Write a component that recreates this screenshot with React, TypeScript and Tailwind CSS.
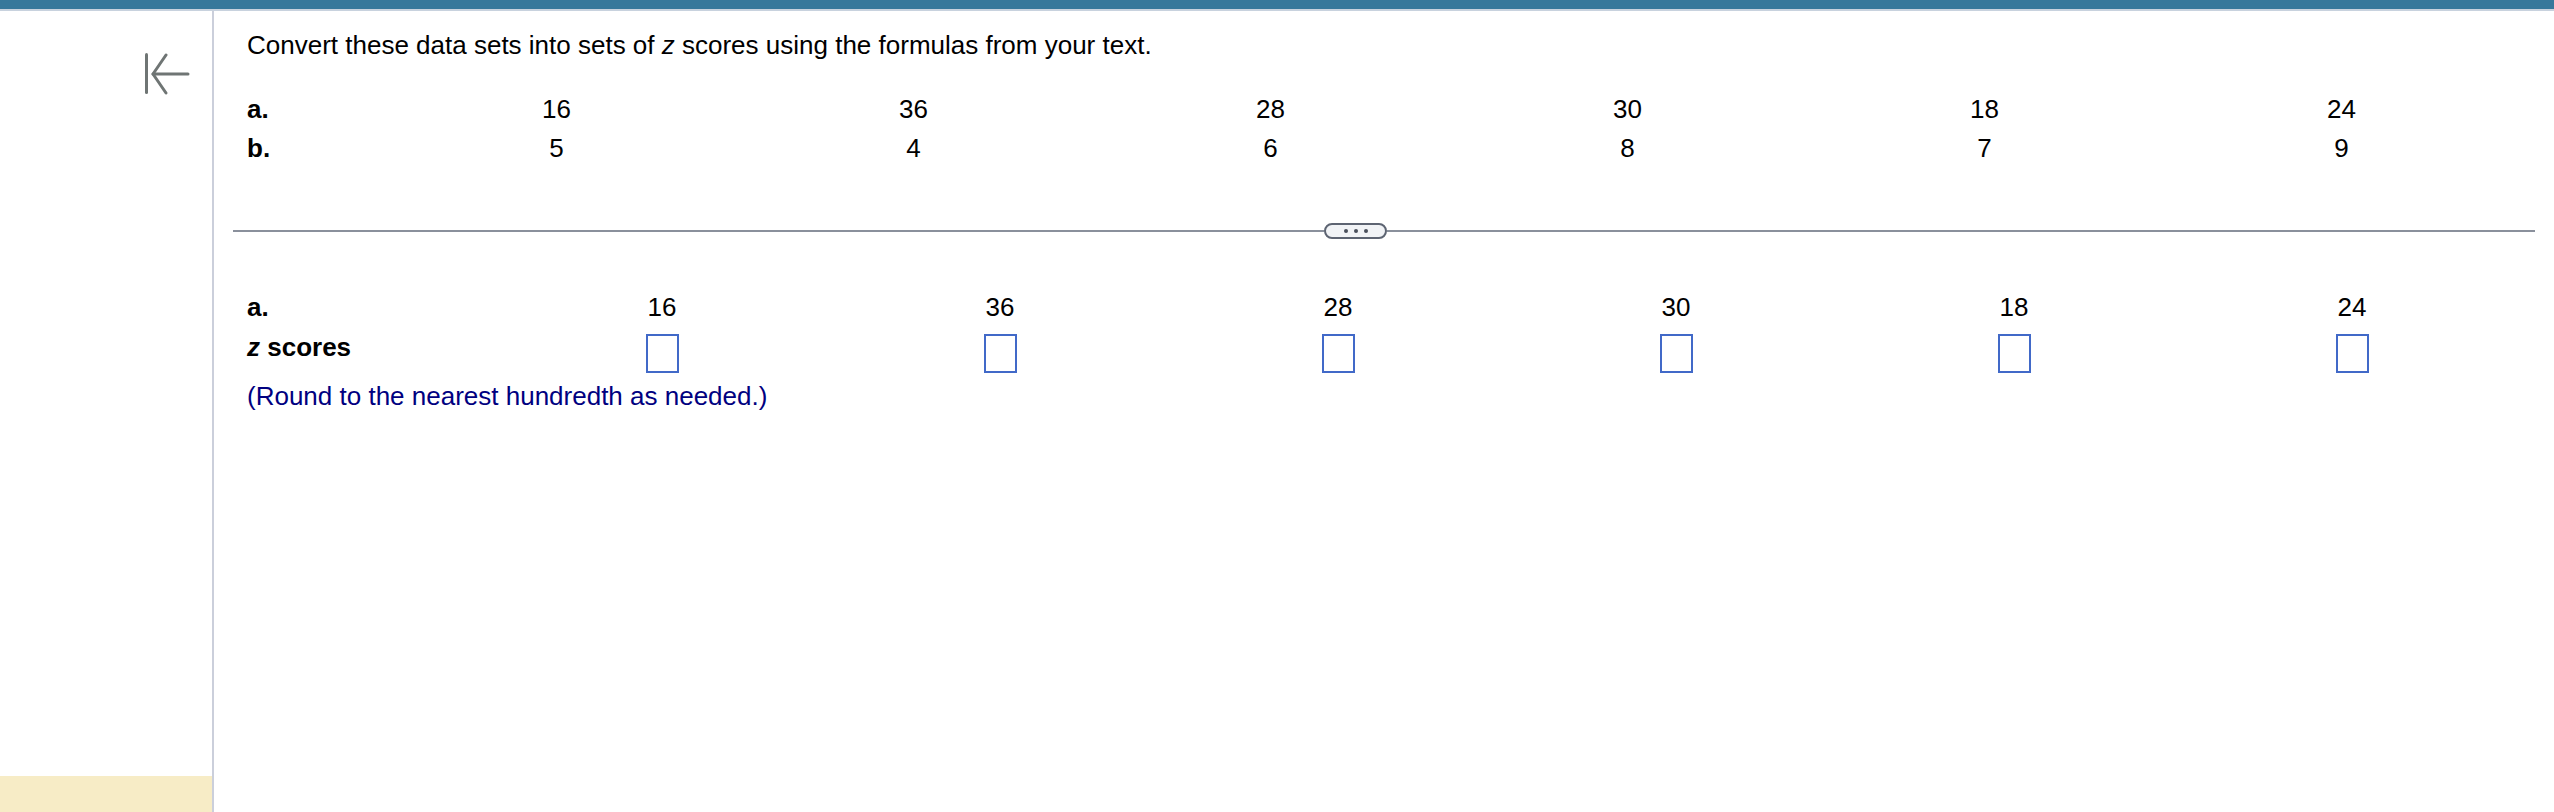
const topValues = [
  { a: 16, b: 5 },
  { a: 36, b: 4 },
  { a: 28, b: 6 },
  { a: 30, b: 8 },
  { a: 18, b: 7 },
  { a: 24, b: 9 },
]

function CollapseIcon() {
  return (
    <svg width="46" height="42" viewBox="0 0 46 42" fill="none">
      <path d="M2.5 1.5v38" stroke="#6f7574" strokeWidth="3" strokeLinecap="round" />
      <path d="M9 21h35" stroke="#6f7574" strokeWidth="3" strokeLinecap="round" />
      <path d="M22 2L9 21l13 19" stroke="#6f7574" strokeWidth="3" strokeLinecap="round" strokeLinejoin="round" />
    </svg>
  )
}

function AnswerBox() {
  return <div className="mt-[2px] h-[39px] w-[33px] border-2 border-[#4169c8] bg-white" />
}

export default function App() {
  return (
    <div className="flex h-[812px] w-full flex-col bg-white font-['Liberation_Sans',Arial,sans-serif] text-[26px] leading-[30px] text-black">
      <div className="h-[9px] bg-[#37789b]" />
      <div className="h-[2px] bg-[#c8d2de]" />
      <div className="flex min-h-0 flex-1">
        <aside className="flex w-[214px] flex-col justify-between border-r-2 border-[#cbcfdb]">
          <div className="flex justify-end pr-[22px] pt-[42px]">
            <CollapseIcon />
          </div>
          <div className="h-[36px] bg-[#f7ecc6]" />
        </aside>

        <main className="flex-1 px-[19px] pt-[19px]">
          <div className="pl-[14px]">
            <p>
              Convert these data sets into sets of <i>z</i> scores using the formulas from your text.
            </p>

            <div className="mt-[34px] grid grid-cols-[131px_repeat(6,357px)] gap-y-[9px]">
              <span className="font-bold">a.</span>
              {topValues.map((v, i) => (
                <span key={'a' + i} className="text-center">{v.a}</span>
              ))}
              <span className="font-bold">b.</span>
              {topValues.map((v, i) => (
                <span key={'b' + i} className="text-center">{v.b}</span>
              ))}
            </div>
          </div>

          <div className="mt-[60px] flex items-center">
            <div className="h-[2px] w-[1091px] bg-[#8a909c]" />
            <div className="flex h-[16px] w-[63px] items-center justify-center gap-[6px] rounded-full border-2 border-[#5d6472] bg-[#f1f3f6]">
              <span className="h-[4px] w-[4px] rounded-full bg-[#4a505c]" />
              <span className="h-[4px] w-[4px] rounded-full bg-[#4a505c]" />
              <span className="h-[4px] w-[4px] rounded-full bg-[#4a505c]" />
            </div>
            <div className="h-[2px] flex-1 bg-[#8a909c]" />
          </div>

          <div className="mt-[53px] pl-[14px]">
            <div className="grid grid-cols-[246px_repeat(6,338px)] items-start gap-y-[10px]">
              <span className="font-bold">a.</span>
              {topValues.map((v, i) => (
                <span key={'s' + i} className="text-center">{v.a}</span>
              ))}
              <span className="font-bold">
                <i>z</i> scores
              </span>
              {topValues.map((v, i) => (
                <div key={'z' + i} className="flex justify-center">
                  <AnswerBox />
                </div>
              ))}
            </div>
            <p className="mt-[8px] text-[#000080]">(Round to the nearest hundredth as needed.)</p>
          </div>
        </main>
      </div>
    </div>
  )
}
